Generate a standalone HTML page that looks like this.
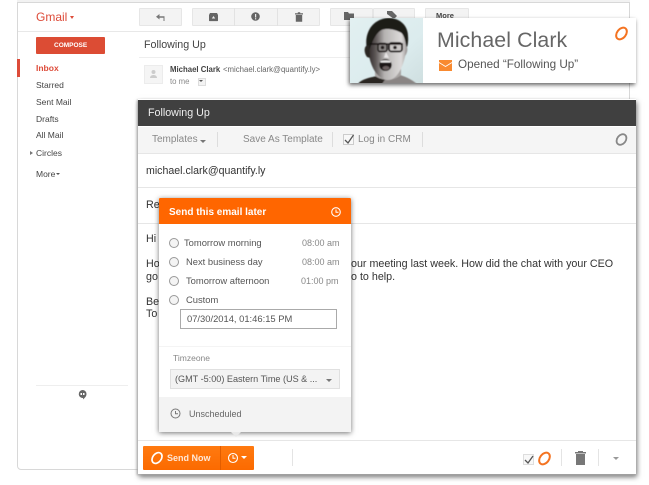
<!DOCTYPE html>
<html><head><meta charset="utf-8">
<style>
html,body{margin:0;padding:0;background:#fff}
#r{position:relative;width:649px;height:485px;overflow:hidden;font-family:"Liberation Sans",sans-serif;background:#fff;filter:blur(.3px)}
#r div{position:absolute;white-space:nowrap}
.t{position:absolute;white-space:nowrap;line-height:14px}
.n{font-size:8.500px;color:#444;left:36px}
.btn{background:#f3f3f3;border:1px solid #e6e6e6;border-radius:1px;box-sizing:border-box;height:18px;top:8px}
.rad{width:8px;height:8px;border:1px solid #999;border-radius:50%;background:#f4f4f4;left:169px}
.o{font-size:9.400px;color:#555}
.tm{font-size:9px;color:#888}
.b{font-size:10.720px;color:#333}
svg{position:absolute;overflow:visible}
</style></head><body><div id="r">
<!-- gmail frame -->
<div style="left:17px;top:0;width:613px;height:2px;background:#f2f2f2"></div>
<div style="left:17px;top:2px;width:613px;height:468px;border:1px solid #d8d8d8;border-radius:0 0 4px 4px;box-sizing:border-box"></div>
<div style="left:18px;top:31px;width:612px;height:1px;background:#e8e8e8"></div>
<span class="t" style="left:36px;top:10px;font-size:12px;color:#dd4b39">Gmail</span>
<div style="left:70px;top:16px;border:2.500px solid transparent;border-top:3px solid #dd4b39;border-bottom:0"></div>
<div class="btn" style="left:139px;width:43px"></div>
<svg style="left:156px;top:14px" width="9" height="7"><path d="M3.500 0L0 2.800 3.500 5.500V3.800H7.500V7H8.500V2.200H3.500z" fill="#777"/></svg>
<div class="btn" style="left:192px;width:128px"></div>
<div style="left:234px;top:8px;width:1px;height:18px;background:#e2e2e2"></div>
<div style="left:277px;top:8px;width:1px;height:18px;background:#e2e2e2"></div>
<svg style="left:209px;top:13px" width="9" height="8"><path d="M1 0h7l1 2v5.500a.6.6 0 0 1-.6.600H.6A.6.6 0 0 1 0 7.500V2z" fill="#666"/><path d="M4.500 3L2.800 5.500h3.400z" fill="#eee"/></svg>
<svg style="left:251px;top:12px" width="9" height="9"><circle cx="4.500" cy="4.500" r="4.300" fill="#666"/><rect x="4" y="2" width="1.200" height="3.500" fill="#eee"/><rect x="4" y="6.200" width="1.200" height="1.200" fill="#eee"/></svg>
<svg style="left:295px;top:12px" width="8" height="10"><path d="M0 1.200h8V2.500H0zM2.800 .2h2.400v1.500H2.800zM.8 3h6.400v6.800H.8z" fill="#666"/></svg>
<div class="btn" style="left:330px;width:43px"></div>
<div class="btn" style="left:373px;width:42px"></div>
<div class="btn" style="left:425px;width:44px"></div>
<svg style="left:344px;top:12px" width="10" height="8"><path d="M0 0h4l1 1.500h5V8H0z" fill="#666"/></svg>
<svg style="left:387px;top:11px" width="10" height="9"><path d="M0 0h5l5 5-3 3-7-5z" fill="#666"/></svg>
<span class="t" style="left:436px;top:9px;font-size:7.500px;font-weight:bold;color:#444">More</span>
<div style="left:36px;top:37px;width:69px;height:17px;background:#dc4c34;border-radius:1px"></div>
<span class="t" style="left:54px;top:39px;font-size:6.500px;font-weight:bold;color:#fff">COMPOSE</span>
<div style="left:17px;top:59px;width:3px;height:18px;background:#dd4b39"></div>
<span class="t n" style="top:61px;color:#dd4b39;font-weight:bold">Inbox</span>
<span class="t n" style="top:78px">Starred</span>
<span class="t n" style="top:95px">Sent Mail</span>
<span class="t n" style="top:112px">Drafts</span>
<span class="t n" style="top:128px">All Mail</span>
<span class="t n" style="top:146px">Circles</span>
<div style="left:30px;top:151px;border:2.500px solid transparent;border-left:3px solid #777;border-right:0"></div>
<span class="t n" style="top:167px">More</span>
<div style="left:56px;top:173px;border:2px solid transparent;border-top:2.500px solid #555;border-bottom:0"></div>
<div style="left:36px;top:385px;width:92px;height:1px;background:#eee"></div>
<svg style="left:78px;top:390px" width="9" height="10"><path d="M4.500 0a4 4 0 0 1 4 4c0 2.500-2 4-3.500 5.500V8a4 4 0 0 1-.5-8z" fill="#666"/><rect x="2.500" y="3" width="1.500" height="2" fill="#fff"/><rect x="5" y="3" width="1.500" height="2" fill="#fff"/></svg>
<span class="t" style="left:144px;top:38px;font-size:10.700px;color:#444">Following Up</span>
<div style="left:139px;top:57px;width:211px;height:1px;background:#eee"></div>
<div style="left:144px;top:65px;width:19px;height:19px;background:#f5f5f5;border:1px solid #ececec;box-sizing:border-box"></div>
<svg style="left:149px;top:69px" width="9" height="10"><circle cx="4.500" cy="3" r="2" fill="#ccc"/><path d="M1 9c0-4 7-4 7 0z" fill="#ccc"/></svg>
<span class="t" style="left:170px;top:63px;font-size:7.800px;font-weight:bold;color:#444">Michael Clark</span>
<span class="t" style="left:223px;top:63px;font-size:7.800px;color:#666">&lt;michael.clark@quantify.ly&gt;</span>
<span class="t" style="left:170px;top:75px;font-size:7.800px;color:#888">to me</span>
<div style="left:198px;top:78px;width:6px;height:6px;background:#f3f3f3;border:1px solid #ddd"></div>
<div style="left:199px;top:80px;border:2px solid transparent;border-top:2.500px solid #555;border-bottom:0"></div>
<!-- compose -->
<div style="left:138px;top:99px;width:498px;height:375px;background:#fff;box-shadow:-1px 1px 2px #aaa,1px 3px 5px rgba(0,0,0,.55)"></div>
<div style="left:138px;top:100px;width:498px;height:26px;background:#404040"></div>
<span class="t" style="left:148px;top:106px;font-size:10.700px;color:#eee">Following Up</span>
<div style="left:138px;top:127px;width:498px;height:26px;background:#f5f5f5;border-bottom:1px solid #e6e6e6"></div>
<span class="t" style="left:152px;top:133px;font-size:10px;color:#888">Templates</span>
<div style="left:200px;top:140px;border:3px solid transparent;border-top:3px solid #777;border-bottom:0"></div>
<div style="left:217px;top:132px;width:1px;height:15px;background:#ddd"></div>
<span class="t" style="left:243px;top:133px;font-size:10px;color:#888">Save As Template</span>
<div style="left:332px;top:132px;width:1px;height:15px;background:#ddd"></div>
<div style="left:343px;top:134px;width:9px;height:9px;border:1px solid #ccc;background:#f8f8f8"></div>
<svg style="left:344px;top:134px" width="12" height="11"><path d="M1 6l3 3 5.500-8" fill="none" stroke="#555" stroke-width="1.300"/></svg>
<span class="t" style="left:358px;top:133px;font-size:10px;color:#888">Log in CRM</span>
<div style="left:422px;top:132px;width:1px;height:15px;background:#ddd"></div>
<svg style="left:615px;top:133px" width="13" height="13"><ellipse cx="6.500" cy="6.500" rx="4.300" ry="5.800" transform="rotate(38 6.500 6.500)" fill="none" stroke="#888" stroke-width="1.800"/></svg>
<span class="t" style="left:146px;top:164px;font-size:10.600px;color:#333">michael.clark@quantify.ly</span>
<div style="left:138px;top:187px;width:498px;height:1px;background:#e6e6e6"></div>
<span class="t b" style="left:146px;top:198px">Re</span>
<div style="left:138px;top:223px;width:498px;height:1px;background:#e6e6e6"></div>
<span class="t b" style="left:146px;top:232px">Hi</span>
<span class="t b" style="left:146px;top:257px">Ho</span>
<span class="t b" style="left:146px;top:270px">go</span>
<span class="t b" style="left:146px;top:295px">Be</span>
<span class="t b" style="left:146px;top:307px">To</span>
<span class="t b" style="left:351px;top:257px">our meeting last week. How did the chat with your CEO</span>
<span class="t b" style="left:351px;top:270px">o to help.</span>
<div style="left:138px;top:440px;width:498px;height:1px;background:#e6e6e6"></div>
<!-- popup -->
<div style="left:159px;top:198px;width:192px;height:234px;background:#fff;box-shadow:0 1px 5px rgba(0,0,0,.55)"></div>
<div style="left:159px;top:198px;width:192px;height:26px;background:#ff6600;border-radius:1px 1px 0 0"></div>
<span class="t" style="left:169px;top:205.500px;font-size:10px;font-weight:bold;color:#fff">Send this email later</span>
<svg style="left:331px;top:207px" width="10" height="10"><circle cx="5" cy="5" r="4.300" fill="none" stroke="#fff" stroke-width="1.100"/><path d="M5 2.500V5.300H7.500" fill="none" stroke="#fff"/></svg>
<div class="rad" style="top:238px"></div><span class="t o" style="left:184px;top:236px">Tomorrow morning</span><span class="t tm" style="left:302px;top:236px">08:00 am</span>
<div class="rad" style="top:257px"></div><span class="t o" style="left:186px;top:255px">Next business day</span><span class="t tm" style="left:302px;top:255px">08:00 am</span>
<div class="rad" style="top:276px"></div><span class="t o" style="left:186px;top:274px">Tomorrow afternoon</span><span class="t tm" style="left:301px;top:274px">01:00 pm</span>
<div class="rad" style="top:295px"></div><span class="t o" style="left:186px;top:293px">Custom</span>
<div style="left:180px;top:309px;width:157px;height:20px;border:1px solid #aaa;box-sizing:border-box;background:#fff"></div>
<span class="t" style="left:187px;top:312px;font-size:9.400px;color:#555">07/30/2014, 01:46:15 PM</span>
<div style="left:159px;top:346px;width:192px;height:1px;background:#f4f4f4"></div>
<span class="t" style="left:173px;top:351px;font-size:8.500px;color:#888">Timzeone</span>
<div style="left:170px;top:369px;width:170px;height:20px;background:#f3f3f3;border:1px solid #e0e0e0;box-sizing:border-box"></div>
<span class="t" style="left:175px;top:372px;font-size:9.100px;color:#555">(GMT -5:00) Eastern Time (US &amp; ...</span>
<div style="left:326px;top:379px;border:3px solid transparent;border-top:3px solid #777;border-bottom:0"></div>
<div style="left:159px;top:397px;width:192px;height:35px;background:#f3f3f3"></div>
<svg style="left:170px;top:408px" width="11" height="11"><circle cx="5.500" cy="5.500" r="4.500" fill="none" stroke="#777"/><path d="M5.500 3V5.800H8" fill="none" stroke="#777"/></svg>
<span class="t" style="left:189px;top:407px;font-size:9px;color:#666">Unscheduled</span>
<div style="left:231px;top:432px;border:5px solid transparent;border-top:5px solid #e8e8e8;border-bottom:0"></div>
<!-- send -->
<div style="left:143px;top:446px;width:111px;height:24px;background:linear-gradient(#ff7a10,#fb6a00);border-radius:1px"></div>
<div style="left:220px;top:446px;width:1px;height:24px;background:#e25d00"></div>
<svg style="left:150px;top:451px" width="14" height="14"><ellipse cx="7" cy="7" rx="4.300" ry="6" transform="rotate(38 7 7)" fill="none" stroke="#fff" stroke-width="1.700"/></svg>
<span class="t" style="left:167px;top:451px;font-size:9px;font-weight:bold;color:#ffe8d8">Send Now</span>
<svg style="left:227px;top:452px" width="12" height="12"><circle cx="6" cy="6" r="4.500" fill="none" stroke="#fff" stroke-width="1.100"/><path d="M6 3V6.300H8.500" fill="none" stroke="#fff"/></svg>
<div style="left:241px;top:456px;border:3.500px solid transparent;border-top:3.500px solid #fff;border-bottom:0"></div>
<div style="left:292px;top:449px;width:1px;height:17px;background:#e4e4e4"></div>
<div style="left:523px;top:454px;width:9px;height:9px;border:1px solid #ddd;background:#f8f8f8"></div>
<svg style="left:524px;top:454px" width="12" height="11"><path d="M1 6l3 3 5-7" fill="none" stroke="#555" stroke-width="1.300"/></svg>
<svg style="left:537px;top:451px" width="15" height="15"><ellipse cx="7.500" cy="7.500" rx="4.500" ry="6.500" transform="rotate(38 7.500 7.500)" fill="none" stroke="#f47321" stroke-width="2"/></svg>
<div style="left:561px;top:449px;width:1px;height:17px;background:#e4e4e4"></div>
<svg style="left:575px;top:451px" width="11" height="14"><path d="M0 1h11v1.500H0zM3 0h5v1.500H3zM1 3h9v11H1z" fill="#777"/></svg>
<div style="left:598px;top:449px;width:1px;height:17px;background:#e4e4e4"></div>
<div style="left:613px;top:457px;border:3px solid transparent;border-top:3.500px solid #999;border-bottom:0"></div>
<!-- contact card -->
<div style="left:350px;top:18px;width:286px;height:65px;background:#fff;box-shadow:-1px 2px 4px rgba(0,0,0,.6)"></div>
<svg style="left:350px;top:18px" width="73" height="65" viewBox="0 0 73 65">
<defs>
<filter id="bl" x="-5%" y="-5%" width="110%" height="110%"><feGaussianBlur stdDeviation=".6"/></filter>
<linearGradient id="bg" x1="0" y1="0" x2="1" y2="1"><stop offset="0" stop-color="#e2f0f1"/><stop offset=".6" stop-color="#dcecee"/><stop offset="1" stop-color="#cfdfe0"/></linearGradient>
<linearGradient id="fc" x1="0" y1="0" x2="1" y2="0"><stop offset="0" stop-color="#2e2928"/><stop offset=".2" stop-color="#5e5958"/><stop offset=".42" stop-color="#b5b2b1"/><stop offset=".85" stop-color="#dddbda"/><stop offset="1" stop-color="#a09c9b"/></linearGradient>
<clipPath id="pc"><rect width="73" height="65"/></clipPath>
</defs>
<rect width="73" height="65" fill="url(#bg)"/>
<g filter="url(#bl)" clip-path="url(#pc)">
<path d="M8 66c3-5 14-7 20-8l22-1c6 2 11 4 17 9z" fill="#8a8584"/>
<path d="M8 66c3-5 14-7 20-8l8 2-4 6z" fill="#2a2524"/>
<path d="M25 44h26v13c-6 6-19 6-26 1z" fill="#a8a4a3"/>
<path d="M18 26C18 42 24 60 37 62c10 1 18-14 20-36C57 14 45 6 36 6 27 6 18 14 18 26z" fill="url(#fc)"/>
<path d="M18 36C12 16 22 1 38 0c12-.5 20 8 20 18 .5 6-.5 10-1.500 13-.5-6-2-13-5-16-7-4-15-5-20-3-7 4-10 14-13.500 24z" fill="#1f1a19"/>
<path d="M16 28c-2 2-2 7 1 11l3 1-1-13z" fill="#2a2524"/>
<path d="M56 28c2 1 2 6-1 10z" fill="#a09c9b"/>
<rect x="28" y="25.500" width="9" height="8" rx="2" fill="#8a8685" stroke="#141110" stroke-width="1.500"/>
<rect x="39" y="25" width="13" height="8.500" rx="2.500" fill="#c9c6c5" stroke="#141110" stroke-width="1.800"/>
<path d="M20 26h33" stroke="#141110" stroke-width="1.400"/>
<circle cx="32.500" cy="29.500" r="1.800" fill="#231f1e"/>
<circle cx="45" cy="29.500" r="1.800" fill="#231f1e"/>
<path d="M36 34l-2 5.500 5 .5z" fill="#e8e6e6"/>
<ellipse cx="35.500" cy="47" rx="6.200" ry="6" fill="#1a1514"/>
<path d="M30.500 43c3-1 7-1 10 0v1.500H30.500z" fill="#e8e6e6"/>
<ellipse cx="36" cy="50" rx="3.500" ry="2" fill="#6a5f5e"/>
</g>
</svg>
<span class="t" style="left:437px;top:27px;font-size:21.300px;line-height:26px;color:#666;letter-spacing:.1px">Michael Clark</span>
<div style="left:439px;top:60px;width:13px;height:11px;background:#f98a30"></div>
<svg style="left:439px;top:60px" width="13" height="11"><path d="M0 2.500l6.500 4L13 2.500" fill="none" stroke="#fff" stroke-width=".8"/></svg>
<span class="t" style="left:458px;top:58px;font-size:11.700px;color:#555">Opened “Following Up”</span>
<svg style="left:614px;top:26px" width="15" height="15"><ellipse cx="7.500" cy="7.500" rx="4.500" ry="6.500" transform="rotate(38 7.500 7.500)" fill="none" stroke="#f47321" stroke-width="2"/></svg>
</div></body></html>
